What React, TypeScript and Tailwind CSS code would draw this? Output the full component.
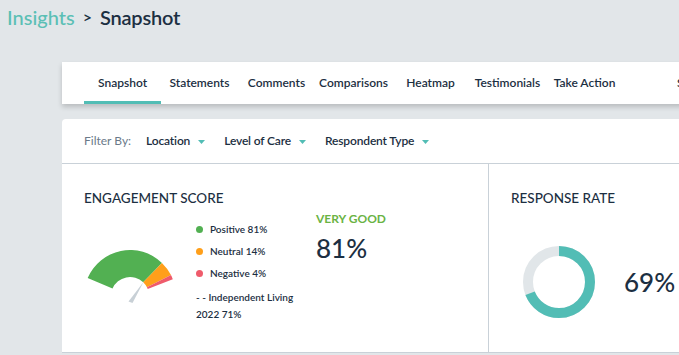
import React from 'react';

const tabs = ['Snapshot', 'Statements', 'Comments', 'Comparisons', 'Heatmap', 'Testimonials', 'Take Action'];

const filters = ['Location', 'Level of Care', 'Respondent Type'];

const legend = [
  { label: 'Positive 81%', color: 'bg-[#52b052]' },
  { label: 'Neutral 14%', color: 'bg-[#ff9f1a]' },
  { label: 'Negative 4%', color: 'bg-[#ef5b6b]' },
];

// gauge geometry (degrees, y up)
const CX = 46;
const CY = 89;
const R_IN = 19;
const R_OUT = 46;

const pt = (r: number, a: number) => {
  const rad = (a * Math.PI) / 180;
  return `${(CX + r * Math.cos(rad)).toFixed(2)} ${(CY - r * Math.sin(rad)).toFixed(2)}`;
};

const arc = (a0: number, a1: number) =>
  `M ${pt(R_OUT, a0)} A ${R_OUT} ${R_OUT} 0 0 1 ${pt(R_OUT, a1)} L ${pt(R_IN, a1)} A ${R_IN} ${R_IN} 0 0 0 ${pt(R_IN, a0)} Z`;

const Caret = () => (
  <svg width="7" height="4" viewBox="0 0 7 4" className="mt-[2px]">
    <polygon points="0,0 7,0 3.5,4" fill="#52bdb5" />
  </svg>
);

const Gauge = () => (
  <svg width="112" height="110" viewBox="0 0 112 110" className="shrink-0">
    <path d={arc(157, 46)} fill="#52b052" />
    <path d={arc(46, 27)} fill="#ff9f1a" />
    <path d={arc(27, 21.5)} fill="#ef5b6b" />
    <polygon points="59.5,75 48.5,96 44.5,94.5" fill="#c8d0d6" />
  </svg>
);

const Donut = ({ value }: { value: number }) => {
  const c = 2 * Math.PI * 31;
  return (
    <svg width="72" height="72" viewBox="0 0 72 72" className="shrink-0">
      <circle cx="36" cy="36" r="31" fill="none" stroke="#e1e6e9" strokeWidth="10" />
      <circle
        cx="36"
        cy="36"
        r="31"
        fill="none"
        stroke="#52bdb5"
        strokeWidth="10"
        strokeDasharray={`${(c * value) / 100} ${c}`}
        transform="rotate(-90 36 36)"
      />
    </svg>
  );
};

export default function App() {
  return (
    <div className="w-[679px] h-[355px] overflow-hidden bg-[#e2e6e9] font-['Lato',sans-serif] text-[#1c2f42]">
      {/* breadcrumb */}
      <div className="h-[62px] pl-[7px] pt-[3px] flex items-start text-[20px] leading-[28px]">
        <span className="text-[#5bbfb5] font-medium">Insights</span>
        <span className="mx-[8px] text-[16px] font-semibold">&gt;</span>
        <span className="font-semibold tracking-[-0.2px]">Snapshot</span>
      </div>

      {/* tabs */}
      <div className="ml-[62px] w-[700px] h-[42px] bg-white shadow-[0_3px_5px_rgba(0,0,0,0.18)] flex pl-[22px] text-[12px] font-semibold">
        {tabs.map((t, i) => (
          <div
            key={t}
            className={`w-[77px] h-full flex items-center justify-center border-y-[3px] border-t-transparent ${
              i === 0 ? 'border-b-[#52bdb5]' : 'border-b-transparent'
            }`}
          >
            {t}
          </div>
        ))}
        <div className="ml-[54px] h-full flex items-center whitespace-nowrap">Settings</div>
      </div>

      {/* main card */}
      <div className="ml-[62px] mt-[15px] w-[700px] bg-white rounded-tl-[4px]">
        <div className="h-[45px] border-b border-[#c9d1d8] flex items-center pl-[22px] text-[12px]">
          <span className="text-[#6b7a89] mr-[15px]">Filter By:</span>
          {filters.map((f) => (
            <div key={f} className="flex items-center gap-[8px] mr-[19px] font-semibold tracking-[-0.15px]">
              <span>{f}</span>
              <Caret />
            </div>
          ))}
        </div>

        <div className="flex h-[189px] border-b border-[#c9d1d8]">
          {/* engagement score */}
          <div className="w-[427px] border-r border-[#c9d1d8] pl-[22px] pt-[25px]">
            <div className="text-[13.5px] leading-[18px] font-medium">ENGAGEMENT SCORE</div>
            <div className="flex">
              <Gauge />
              <div className="w-[120px] pt-[11px] text-[10px] font-semibold">
                {legend.map((l) => (
                  <div key={l.label} className="h-[22px] flex items-center">
                    <span className={`w-[7px] h-[7px] rounded-full ${l.color} mr-[7px]`} />
                    {l.label}
                  </div>
                ))}
                <div className="mt-[5px] leading-[17px]">
                  - - Independent Living
                  <br />
                  2022 71%
                </div>
              </div>
              <div className="pt-[4px]">
                <div className="text-[12px] leading-[16px] font-bold text-[#6ab344]">VERY GOOD</div>
                <div className="mt-[5px] text-[26px] leading-[32px] font-medium">81%</div>
              </div>
            </div>
          </div>

          {/* response rate */}
          <div className="flex-1 pl-[22px] pt-[25px]">
            <div className="text-[13.5px] leading-[18px] font-medium">RESPONSE RATE</div>
            <div className="flex items-center mt-[39px] ml-[12px] gap-[29px]">
              <Donut value={69} />
              <span className="text-[26px] leading-[32px] font-medium">69%</span>
            </div>
          </div>
        </div>
      </div>
    </div>
  );
}
